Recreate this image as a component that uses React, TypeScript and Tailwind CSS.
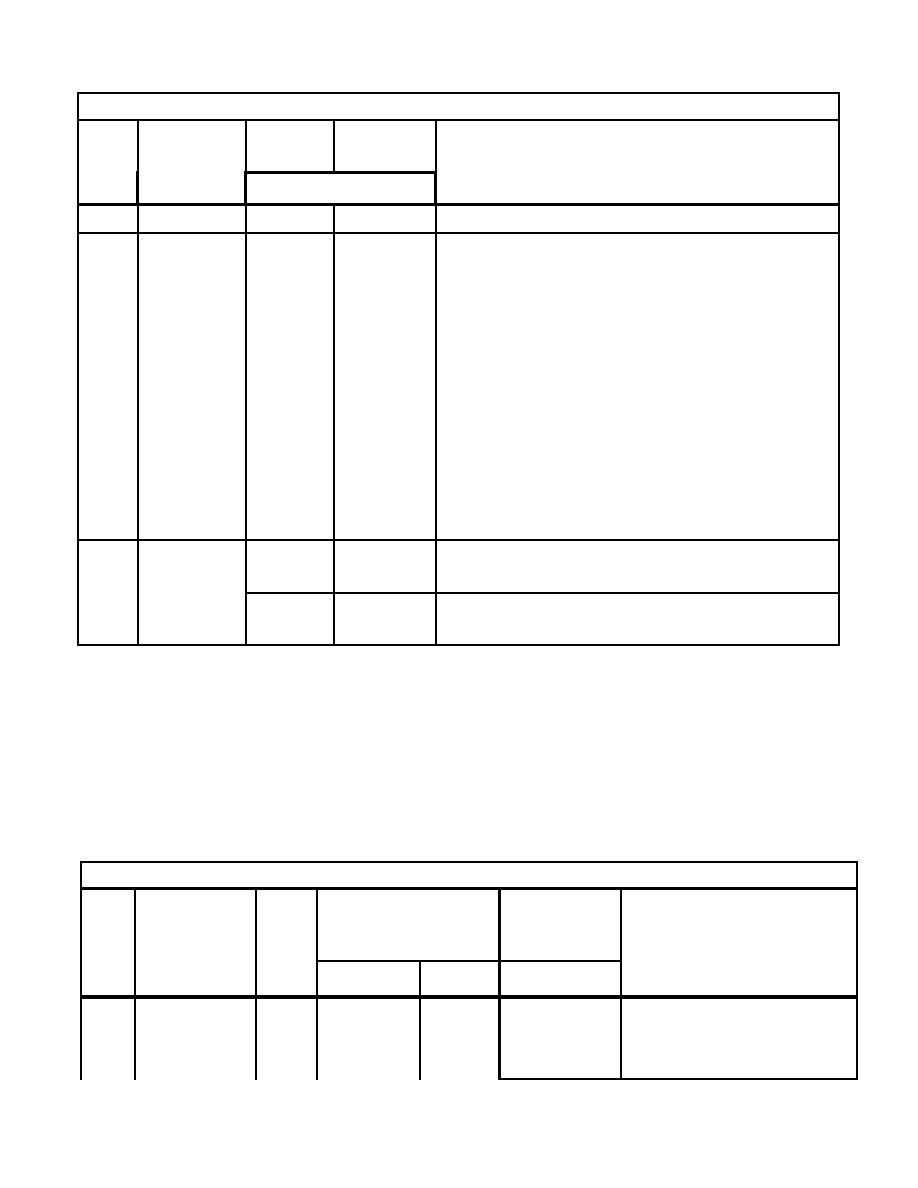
export default function App() {
  return (
    <div className="w-[918px] h-[1188px] bg-white pt-[92px]">
      {/* first table */}
      <div className="ml-[77px] w-[763px] border-2 border-black">
        <div className="h-[27px] border-b-2 border-black" />
        <div className="flex h-[85px] border-b-[3px] border-black">
          <div className="flex w-[60px] flex-col">
            <div className="flex-1 border-r-2 border-black" />
            <div className="h-[32px] border-r-[3px] border-black" />
          </div>
          <div className="flex w-[108px] flex-col">
            <div className="flex-1 border-r-2 border-black" />
            <div className="h-[32px] border-r-[3px] border-black" />
          </div>
          <div className="flex w-[190px] flex-col">
            <div className="flex h-[50px]">
              <div className="w-[88px] border-r-2 border-black" />
              <div className="flex-1 border-r-2 border-black" />
            </div>
            <div className="flex-1 border-t-[3px] border-r-[3px] border-black" />
          </div>
          <div className="flex-1" />
        </div>
        <div className="flex h-[28px] border-b-2 border-black">
          <div className="w-[60px] border-r-2 border-black" />
          <div className="w-[108px] border-r-2 border-black" />
          <div className="w-[88px] border-r-2 border-black" />
          <div className="w-[102px] border-r-2 border-black" />
          <div className="flex-1" />
        </div>
        <div className="flex h-[307px] border-b-2 border-black">
          <div className="w-[60px] border-r-2 border-black" />
          <div className="w-[108px] border-r-2 border-black" />
          <div className="w-[88px] border-r-2 border-black" />
          <div className="w-[102px] border-r-2 border-black" />
          <div className="flex-1" />
        </div>
        <div className="flex h-[103px]">
          <div className="w-[60px] border-r-2 border-black" />
          <div className="w-[108px] border-r-2 border-black" />
          <div className="flex flex-1 flex-col">
            <div className="flex h-[53px] border-b-2 border-black">
              <div className="w-[88px] border-r-2 border-black" />
              <div className="w-[102px] border-r-2 border-black" />
              <div className="flex-1" />
            </div>
            <div className="flex flex-1">
              <div className="w-[88px] border-r-2 border-black" />
              <div className="w-[102px] border-r-2 border-black" />
              <div className="flex-1" />
            </div>
          </div>
        </div>
      </div>

      {/* second table, cut off at the bottom */}
      <div className="ml-[80px] mt-[215px] w-[778px] border-x-2 border-t-2 border-black">
        <div className="h-[27px] border-b-[3px] border-black" />
        <div className="flex h-[109px] border-b-4 border-black">
          <div className="w-[54px] border-r-2 border-black" />
          <div className="w-[121px] border-r-2 border-black" />
          <div className="w-[61px] border-r-2 border-black" />
          <div className="flex w-[304px] flex-col">
            <div className="flex h-[72px] border-b-2 border-black">
              <div className="w-[183px] border-r-[3px] border-black" />
              <div className="flex-1 border-r-2 border-black" />
            </div>
            <div className="flex flex-1">
              <div className="w-[103px] border-r-2 border-black" />
              <div className="w-[80px] border-r-[3px] border-black" />
              <div className="flex-1 border-r-2 border-black" />
            </div>
          </div>
          <div className="flex-1" />
        </div>
        <div className="flex h-[81px]">
          <div className="w-[54px] border-r-2 border-black" />
          <div className="w-[121px] border-r-2 border-black" />
          <div className="w-[61px] border-r-2 border-black" />
          <div className="w-[103px] border-r-2 border-black" />
          <div className="w-[80px] border-r-[3px] border-black" />
          <div className="w-[121px] border-r-2 border-b-2 border-black" />
          <div className="flex-1 border-b-2 border-black" />
        </div>
      </div>
    </div>
  );
}
